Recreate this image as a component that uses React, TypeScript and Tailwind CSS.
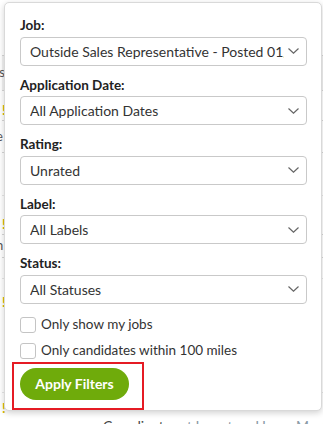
import { useState } from 'react'

const fields = [
  { label: 'Job:', value: 'Outside Sales Representative - Posted 01/02/2024' },
  { label: 'Application Date:', value: 'All Application Dates' },
  { label: 'Rating:', value: 'Unrated' },
  { label: 'Label:', value: 'All Labels' },
  { label: 'Status:', value: 'All Statuses' },
]

function Chevron() {
  return (
    <svg width="11" height="6" viewBox="0 0 11 6" fill="none" className="shrink-0">
      <path d="M0.5 0.5L5.5 5.2L10.5 0.5" stroke="#666" strokeWidth="1.2" />
    </svg>
  )
}

function Check({ label }: { label: string }) {
  const [on, setOn] = useState(false)
  return (
    <label className="flex items-center h-[26px] cursor-pointer" onClick={() => setOn(!on)}>
      <span className="w-4 h-4 rounded-[3px] border border-[#c4c4c4] bg-white shrink-0 flex items-center justify-center">
        {on && <span className="w-2 h-2 bg-[#6fab0b] rounded-[1px]" />}
      </span>
      <span className="ml-[5px] text-[13.5px] text-[#333]">{label}</span>
    </label>
  )
}

export default function App() {
  return (
    <div
      className="relative w-[323px] h-[424px] overflow-hidden bg-white"
      style={{ fontFamily: 'Lato, "Noto Sans", sans-serif' }}
    >
      {/* page behind the popover */}
      <div className="flex flex-col text-[13px] text-[#555] pl-[2px]">
        <div className="h-[55px]" />
        <div className="h-[36px] bg-[#f2f2f2] border-y border-[#d6d6d6] flex items-center">
          <span className="-ml-[10px]">us</span>
        </div>
        <div className="h-[30px] border-b border-[#d6d6d6] flex items-end text-[#d4b800] font-bold">!</div>
        <div className="h-[32px] border-b border-[#d6d6d6] flex items-center">
          <span className="-ml-[6px]">e</span>
        </div>
        <div className="h-[43px] border-b border-[#e6e6e6]" />
        <div className="h-[39px] border-b border-[#d6d6d6] flex items-end text-[#d4b800] font-bold">!</div>
        <div className="h-[23px] border-b border-[#d6d6d6] flex items-center">
          <span className="-ml-[6px]">n</span>
        </div>
        <div className="h-[21px] border-b border-[#e6e6e6]" />
        <div className="h-[33px] flex items-end text-[#d4b800] font-bold">!</div>
        <div className="h-[81px] border-b border-[#e6e6e6]" />
        <div className="h-[25px] flex items-end text-[#d4b800] font-bold">!</div>
        <div className="pl-[101px] text-[14px] leading-[16px] whitespace-nowrap">
          <span className="text-[#444]">Coordinator</span>{' '}
          <span className="text-[#8a9aa6]">at Investors Home Mortgage</span>
        </div>
      </div>

      {/* filter popover */}
      <div className="absolute left-[4px] top-[2px] w-[318px] bg-white border border-[#d9d9d9] rounded-[5px] shadow-[0_2px_6px_rgba(0,0,0,0.18)] pl-[15px] pr-[14px] pt-[13px] pb-[10px]">
        <div className="flex flex-col gap-[10px]">
          {fields.map((f) => (
            <div key={f.label}>
              <div className="text-[13.5px] leading-[19.5px] font-bold text-[#222]">{f.label}</div>
              <div className="mt-px h-[29px] border border-[#c9c9c9] rounded-[4px] flex items-center pl-[9px] pr-[7px] gap-1">
                <span className="flex-1 overflow-hidden whitespace-nowrap text-[14px] text-[#333]">{f.value}</span>
                <Chevron />
              </div>
            </div>
          ))}
        </div>
        <div className="mt-[8px] flex flex-col">
          <Check label="Only show my jobs" />
          <Check label="Only candidates within 100 miles" />
        </div>
        <button className="mt-[4px] h-[32px] w-[109px] rounded-full bg-[#6fab0b] text-white font-bold text-[14px]">
          Apply Filters
        </button>
      </div>

      {/* red annotation box */}
      <div className="absolute left-[12px] top-[362px] w-[132px] h-[48px] border-2 border-[#e51b24]" />
    </div>
  )
}
